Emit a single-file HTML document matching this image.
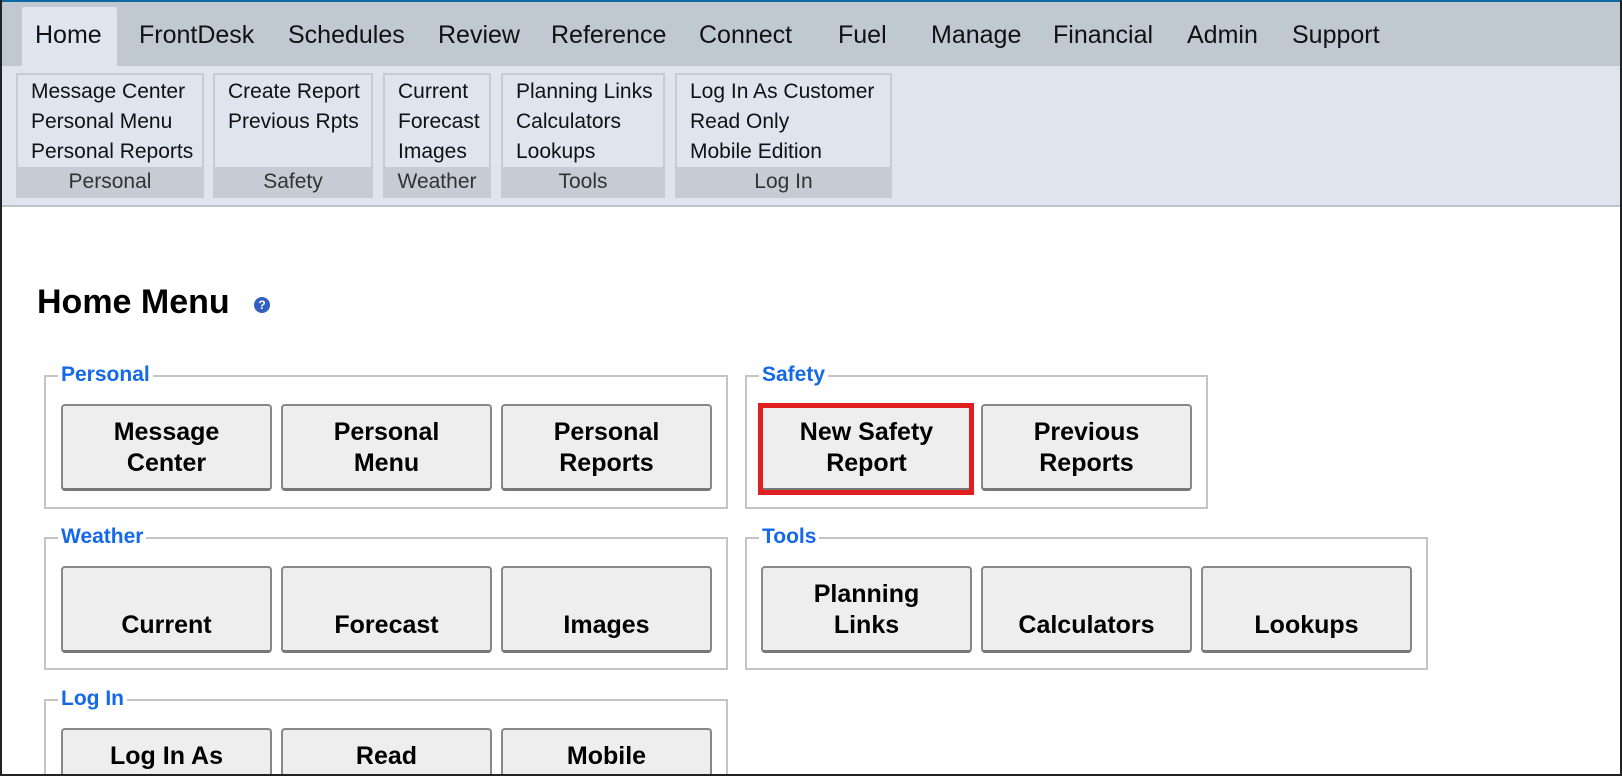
<!DOCTYPE html>
<html><head><meta charset="utf-8"><style>
*{box-sizing:border-box;margin:0;padding:0}
html,body{width:1622px;height:776px;overflow:hidden}
body{background:#fff;font-family:"Liberation Sans",sans-serif;position:relative}
.wrap{position:absolute;left:0;top:0;width:1622px;height:776px;overflow:hidden}
.frame{position:absolute;left:0;top:0;width:1622px;height:776px;border-left:2px solid #222;border-right:2px solid #222;border-bottom:2px solid #222;pointer-events:none;z-index:5}
.top{position:absolute;left:0;top:0;width:1622px;height:66px;background:#c0c8d1;border-top:2px solid #0b6aa2}
.sub{position:absolute;left:0;top:66px;width:1622px;height:141px;background:#dee5ef;border-bottom:2px solid #bcc4cc}
.tab{position:absolute;top:7px;left:22px;width:95px;height:62px;background:#dee5ef;border-radius:2px 2px 0 0}
.nav{position:absolute;top:21px;font-size:25px;color:#111;white-space:nowrap}
.box{position:absolute;top:73px;height:125px;border:2px solid #c5ccd4;background:#dee5ef}
.box .it{padding:2px 0 0 13px;font-size:21px;line-height:30px;color:#111;white-space:nowrap}
.box .ft{position:absolute;left:0;right:0;bottom:0;height:29px;background:#c5ccd4;text-align:center;font-size:21px;line-height:30px;color:#333}
h1{position:absolute;left:37px;top:283px;font-size:34px;font-weight:bold;color:#000}
.q{position:absolute;left:254px;top:297px;width:16px;height:16px;border-radius:50%;background:#3060c0;color:#fff;font-size:12px;font-weight:bold;text-align:center;line-height:16px}
.fs{position:absolute;border:2px solid #c4c4c4}
.lg{position:absolute;top:-15px;left:12px;background:#fff;padding:0 3px;color:#1469e8;font-weight:bold;font-size:21px;line-height:26px}
.btn{position:absolute;width:211px;height:87px;background:#eee;border:2px solid #888;border-bottom:3px solid #777;border-radius:4px;display:flex;align-items:flex-end;justify-content:center;text-align:center;font-weight:bold;font-size:25px;line-height:31px;padding-bottom:9px;color:#000}
.bb{height:48px;border-bottom:none;border-radius:4px 4px 0 0;align-items:flex-start;padding-top:11px}
.red{position:absolute;left:758px;top:403px;width:216px;height:92px;border:5px solid #e02020;z-index:3}
</style></head><body><div class="wrap">
<div class="top"></div>
<div class="sub"></div>
<div class="tab"></div>
<div class="nav" style="left:35px">Home</div>
<div class="nav" style="left:139px">FrontDesk</div>
<div class="nav" style="left:288px">Schedules</div>
<div class="nav" style="left:438px">Review</div>
<div class="nav" style="left:551px">Reference</div>
<div class="nav" style="left:699px">Connect</div>
<div class="nav" style="left:838px">Fuel</div>
<div class="nav" style="left:931px">Manage</div>
<div class="nav" style="left:1053px">Financial</div>
<div class="nav" style="left:1187px">Admin</div>
<div class="nav" style="left:1292px">Support</div>

<div class="box" style="left:16px;width:188px"><div class="it">Message Center<br>Personal Menu<br>Personal Reports</div><div class="ft">Personal</div></div>
<div class="box" style="left:213px;width:160px"><div class="it">Create Report<br>Previous Rpts</div><div class="ft">Safety</div></div>
<div class="box" style="left:383px;width:108px"><div class="it">Current<br>Forecast<br>Images</div><div class="ft">Weather</div></div>
<div class="box" style="left:501px;width:164px"><div class="it">Planning Links<br>Calculators<br>Lookups</div><div class="ft">Tools</div></div>
<div class="box" style="left:675px;width:217px"><div class="it">Log In As Customer<br>Read Only<br>Mobile Edition</div><div class="ft">Log In</div></div>

<h1>Home Menu</h1><div class="q">?</div>

<div class="fs" style="left:44px;top:375px;width:684px;height:134px"><div class="lg">Personal</div></div>
<div class="fs" style="left:745px;top:375px;width:463px;height:134px"><div class="lg">Safety</div></div>
<div class="fs" style="left:44px;top:537px;width:684px;height:133px"><div class="lg">Weather</div></div>
<div class="fs" style="left:745px;top:537px;width:683px;height:133px"><div class="lg">Tools</div></div>
<div class="fs" style="left:44px;top:699px;width:684px;height:77px;border-bottom:none"><div class="lg">Log In</div></div>

<div class="btn" style="left:61px;top:404px">Message<br>Center</div>
<div class="btn" style="left:281px;top:404px">Personal<br>Menu</div>
<div class="btn" style="left:501px;top:404px">Personal<br>Reports</div>
<div class="btn" style="left:761px;top:404px">New Safety<br>Report</div>
<div class="btn" style="left:981px;top:404px">Previous<br>Reports</div>
<div class="red"></div>

<div class="btn" style="left:61px;top:566px">Current</div>
<div class="btn" style="left:281px;top:566px">Forecast</div>
<div class="btn" style="left:501px;top:566px">Images</div>
<div class="btn" style="left:761px;top:566px">Planning<br>Links</div>
<div class="btn" style="left:981px;top:566px">Calculators</div>
<div class="btn" style="left:1201px;top:566px">Lookups</div>

<div class="btn bb" style="left:61px;top:728px">Log In As</div>
<div class="btn bb" style="left:281px;top:728px">Read</div>
<div class="btn bb" style="left:501px;top:728px">Mobile</div>
<div class="frame"></div>
</div></body></html>
